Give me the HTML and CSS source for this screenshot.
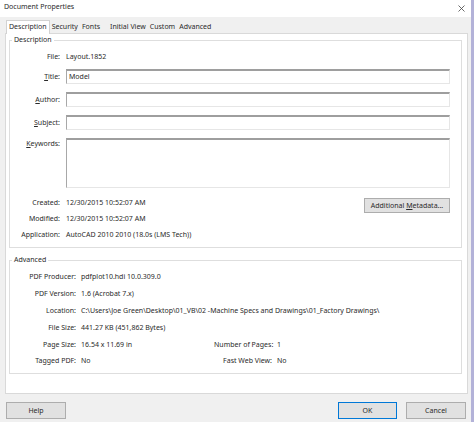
FILE: index.html
```html
<!DOCTYPE html>
<html>
<head>
<meta charset="utf-8">
<title>Document Properties</title>
<link rel="stylesheet" href="styles.css">
</head>
<body>
<div class="dialog">
  <div class="titlebar">
    <span class="title">Document Properties</span>
    <svg class="close" width="7" height="7" viewBox="0 0 7 7"><path d="M0.5 0.5L6.5 6.5M6.5 0.5L0.5 6.5" stroke="#444" stroke-width="0.8" fill="none"/></svg>
  </div>
  <div class="tabs">
    <span class="tab active">Description</span>
    <span class="tab">Security</span>
    <span class="tab tab-fonts">Fonts</span>
    <span class="tab">Initial View</span>
    <span class="tab">Custom</span>
    <span class="tab">Advanced</span>
  </div>
  <div class="panel">
    <fieldset class="group group-desc">
      <legend>Description</legend>
      <div class="form">
        <div class="row row-text"><span class="label">File:</span><span class="value">Layout.1852</span></div>
        <div class="row row-field row-first"><span class="label"><u>T</u>itle:</span><div class="input">Model</div></div>
        <div class="row row-field"><span class="label"><u>A</u>uthor:</span><div class="input"></div></div>
        <div class="row row-field"><span class="label"><u>S</u>ubject:</span><div class="input"></div></div>
        <div class="row row-area"><span class="label"><u>K</u>eywords:</span><div class="input textarea"></div></div>
        <div class="dates">
          <div class="date-list">
            <div class="row row-text"><span class="label">Created:</span><span class="value">12/30/2015 10:52:07 AM</span></div>
            <div class="row row-text"><span class="label">Modified:</span><span class="value">12/30/2015 10:52:07 AM</span></div>
            <div class="row row-text"><span class="label">Application:</span><span class="value">AutoCAD 2010 2010 (18.0s (LMS Tech))</span></div>
          </div>
          <button class="btn btn-meta">Additional <u>M</u>etadata...</button>
        </div>
      </div>
    </fieldset>
    <fieldset class="group group-adv">
      <legend>Advanced</legend>
      <div class="adv">
        <span class="k">PDF Producer:</span><span class="v wide">pdfplot10.hdi 10.0.309.0</span>
        <span class="k">PDF Version:</span><span class="v wide">1.6 (Acrobat 7.x)</span>
        <span class="k">Location:</span><span class="v wide">C:\Users\Joe Green\Desktop\01_VB\02 -Machine Specs and Drawings\01_Factory Drawings\</span>
        <span class="k">File Size:</span><span class="v wide">441.27 KB (451,862 Bytes)</span>
        <span class="k">Page Size:</span><span class="v">16.54 x 11.69 in</span><span class="k">Number of Pages:</span><span class="v">1</span>
        <span class="k">Tagged PDF:</span><span class="v">No</span><span class="k">Fast Web View:</span><span class="v">No</span>
      </div>
    </fieldset>
  </div>
  <div class="footer">
    <button class="btn btn-help">Help</button>
    <button class="btn btn-ok">OK</button>
    <button class="btn btn-cancel">Cancel</button>
  </div>
</div>
</body>
</html>
```
FILE: styles.css
```css
html, body {
  margin: 0;
  padding: 0;
}
body {
  width: 474px;
  height: 422px;
  overflow: hidden;
  font-family: "Noto Sans", "DejaVu Sans", sans-serif;
  font-size: 7px;
  line-height: 10px;
  color: #2a2a2a;
}
.dialog {
  display: flex;
  flex-direction: column;
  height: 422px;
  box-sizing: border-box;
  background: #f0f0f0;
  border-right: 3px solid #b3b2d8;
}
.titlebar {
  height: 17px;
  box-sizing: border-box;
  background: #fff;
  display: flex;
  justify-content: space-between;
  align-items: flex-start;
  padding: 2px 6px 0 4px;
}
.close {
  margin-top: 3px;
}
.tabs {
  height: 16px;
  display: flex;
  align-items: flex-end;
  padding-left: 6px;
}
.tab {
  height: 12px;
  line-height: 12px;
  padding: 0 2px;
}
.tab.active {
  height: 12px;
  background: #fff;
  border: 1px solid #d2d2d2;
  border-bottom: none;
  margin-bottom: -1px;
  padding-bottom: 1px;
  position: relative;
  z-index: 1;
}
.tab-fonts {
  margin-right: 6px;
}
.panel {
  height: 361px;
  box-sizing: border-box;
  margin: 0 3px 0 5px;
  background: #fff;
  border: 1px solid #d9d9d9;
  padding: 1px 5px 0 3px;
}
.group {
  margin: 0;
  padding: 0;
  min-width: 0;
  border: 1px solid #dedede;
}
.group legend {
  margin-left: 2px;
  padding: 0 2px;
  line-height: 10px;
}
.group-adv {
  margin-top: 7px;
}
.form {
  display: flex;
  flex-direction: column;
  padding: 5px 11px 5px 0;
}
.row {
  display: flex;
  align-items: center;
}
.label {
  flex: none;
  width: 50px;
  margin-right: 6px;
  text-align: right;
}
.row-text {
  height: 14px;
}
.row-field {
  height: 15px;
  margin-top: 8px;
}
.row-first {
  margin-top: 5px;
}
.row-area {
  height: 50px;
  margin-top: 8px;
  align-items: flex-start;
}
.row-area .label {
  margin-top: 1px;
}
.input {
  flex: 1;
  height: 100%;
  box-sizing: border-box;
  background: #fff;
  border: 1px solid;
  border-color: #9e9e9e #e6e6e6 #e6e6e6 #a8a8a8;
  border-top-width: 2px;
  padding-left: 2px;
  line-height: 11px;
}
.dates {
  display: flex;
  margin-top: 8px;
}
.date-list {
  flex: 1;
  display: flex;
  flex-direction: column;
  gap: 2px;
}
.btn {
  font: inherit;
  color: #2a2a2a;
  background: #e1e1e1;
  border: 1px solid #adadad;
  padding: 0;
  margin: 0;
  height: 17px;
  box-sizing: border-box;
}
.btn u {
  text-decoration: underline;
}
.btn-meta {
  width: 86px;
  height: 15px;
  margin-top: 2px;
  align-self: flex-start;
}
.adv {
  display: grid;
  grid-template-columns: 66px 128px 58px 1fr;
  grid-auto-rows: 16.8px;
  column-gap: 5px;
  align-items: center;
  padding: 4px 0 3px 0;
  white-space: nowrap;
}
.adv .k {
  text-align: right;
}
.adv .wide {
  grid-column: 2 / -1;
}
.footer {
  display: flex;
  align-items: flex-start;
  padding: 8px 5px 0 6px;
}
.btn-help {
  width: 60px;
  margin-right: auto;
}
.btn-ok {
  width: 59px;
  border-color: #0078d7;
}
.btn-cancel {
  width: 60px;
  margin-left: 9px;
}
```
